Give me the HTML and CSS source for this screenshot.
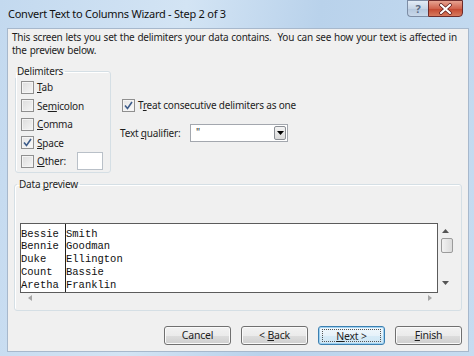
FILE: index.html
```html
<!DOCTYPE html>
<html lang="en">
<head>
    <meta charset="UTF-8">
    <meta name="viewport" content="width=device-width, initial-scale=1.0">
    <title>Convert Text to Columns Wizard</title>
    <link rel="stylesheet" href="styles.css">
</head>
<body>
    <div class="window">
        <div class="titlebar">
            <span class="title">Convert Text to Columns Wizard - Step 2 of 3</span>
            <div class="caption-buttons">
                <span class="help-btn">?</span>
                <span class="close-btn">
                    <svg width="15" height="12" viewBox="0 0 15 12">
                        <path d="M3 2 L12 10 M12 2 L3 10" stroke="#5a1b1b" stroke-width="3.6" stroke-linecap="round" fill="none"/>
                        <path d="M3 2 L12 10 M12 2 L3 10" stroke="#fff" stroke-width="2.2" stroke-linecap="round" fill="none"/>
                    </svg>
                </span>
            </div>
        </div>

        <div class="client">
            <p class="intro">This screen lets you set the delimiters your data contains.&nbsp; You can see how your text is affected in the preview below.</p>

            <div class="options">
                <fieldset class="group delimiters">
                    <legend>Delimiters</legend>
                    <div class="check-row"><span class="checkbox"></span><span><u>T</u>ab</span></div>
                    <div class="check-row"><span class="checkbox"></span><span>Se<u>m</u>icolon</span></div>
                    <div class="check-row"><span class="checkbox"></span><span><u>C</u>omma</span></div>
                    <div class="check-row"><span class="checkbox checked"><svg width="9" height="9" viewBox="0 0 9 9"><path d="M1 4.5 L3.5 7.5 L8 1" stroke="#3d5c8a" stroke-width="1.6" fill="none"/></svg></span><span><u>S</u>pace</span></div>
                    <div class="check-row"><span class="checkbox"></span><span class="other-label"><u>O</u>ther:</span><span class="other-input"></span></div>
                </fieldset>

                <div class="side-options">
                    <div class="check-row"><span class="checkbox checked"><svg width="9" height="9" viewBox="0 0 9 9"><path d="M1 4.5 L3.5 7.5 L8 1" stroke="#3d5c8a" stroke-width="1.6" fill="none"/></svg></span><span>T<u>r</u>eat consecutive delimiters as one</span></div>
                    <div class="qualifier-row">
                        <span class="qualifier-label">Text <u>q</u>ualifier:</span>
                        <div class="select">
                            <span class="select-value">"</span>
                            <span class="select-arrow"><svg width="7" height="4" viewBox="0 0 7 4"><path d="M0 0 H7 L3.5 4 Z" fill="#000"/></svg></span>
                        </div>
                    </div>
                </div>
            </div>

            <fieldset class="group preview-group">
                <legend>Data <u>p</u>review</legend>
                <div class="preview-wrap">
                    <div class="preview-main">
                        <div class="preview-box">
                            <div class="col col-first">
                                <div>Bessie</div>
                                <div>Bennie</div>
                                <div>Duke</div>
                                <div>Count</div>
                                <div>Aretha</div>
                            </div>
                            <div class="col">
                                <div>Smith</div>
                                <div>Goodman</div>
                                <div>Ellington</div>
                                <div>Bassie</div>
                                <div>Franklin</div>
                            </div>
                        </div>
                        <div class="hscroll">
                            <svg width="4" height="6" viewBox="0 0 4 6"><path d="M4 0 V6 L0 3 Z" fill="#a5a5a5"/></svg>
                            <svg width="4" height="6" viewBox="0 0 4 6"><path d="M0 0 V6 L4 3 Z" fill="#a5a5a5"/></svg>
                        </div>
                    </div>
                    <div class="vscroll">
                        <svg width="7" height="4" viewBox="0 0 7 4"><path d="M0 4 H7 L3.5 0 Z" fill="#555"/></svg>
                        <span class="thumb"></span>
                        <svg class="down" width="7" height="4" viewBox="0 0 7 4"><path d="M0 0 H7 L3.5 4 Z" fill="#555"/></svg>
                    </div>
                </div>
            </fieldset>

            <div class="buttons">
                <button class="btn">Cancel</button>
                <button class="btn">&lt; <u>B</u>ack</button>
                <button class="btn btn-default"><span class="focus-ring"><u>N</u>ext &gt;</span></button>
                <button class="btn"><u>F</u>inish</button>
            </div>
        </div>
    </div>
</body>
</html>
```

FILE: styles.css
```css
body {
    margin: 0;
    font-family: "Noto Sans", "Open Sans", sans-serif;
    font-size: 10px;
    letter-spacing: -0.2px;
    color: #1e1e1e;
}

.window {
    width: 474px;
    height: 356px;
    box-sizing: border-box;
    padding: 0 5px 4px 7px;
    display: flex;
    flex-direction: column;
    background: linear-gradient(100deg, #c3d9ef 0%, #d3e4f4 35%, #b9d2eb 60%, #c6dcf1 100%);
}

.titlebar {
    height: 28px;
    flex: none;
    display: flex;
    align-items: flex-start;
}

.title {
    margin-top: 6px;
    margin-left: 1px;
    font-size: 11px;
    letter-spacing: -0.25px;
    color: #111;
}

.caption-buttons {
    margin-left: auto;
    margin-right: 6px;
    display: flex;
}

.help-btn {
    width: 21px;
    height: 17px;
    box-sizing: border-box;
    border: 1px solid #7d8da5;
    border-right: none;
    border-radius: 0 0 0 4px;
    background: linear-gradient(#e3ecf6, #c6d5e6 50%, #b4c7dd 51%, #c9d8ea);
    text-align: center;
    font-size: 11px;
    font-weight: bold;
    line-height: 15px;
    color: #5b6b82;
}

.close-btn {
    width: 35px;
    height: 17px;
    box-sizing: border-box;
    border: 1px solid #6d2b2b;
    border-radius: 0 0 4px 0;
    background: linear-gradient(#e7a391, #d0644e 50%, #c3462f 51%, #d77a5e);
    display: flex;
    align-items: center;
    justify-content: center;
}

.client {
    flex: 1;
    border: 1px solid #a7b8cc;
    background-color: #f0f0f0;
    display: flex;
    flex-direction: column;
}

.intro {
    margin: 0;
    padding: 2px 0 0 4px;
    line-height: 13px;
    height: 28px;
    letter-spacing: -0.25px;
    word-spacing: 0.6px;
}

.options {
    display: flex;
    margin-top: 6px;
}

.group {
    margin: 0;
    padding: 0;
    border: 1px solid #d5dfe5;
    border-radius: 3px;
    box-shadow: inset 1px 1px 0 #fff;
}

.group legend {
    padding: 0 2px;
    margin-left: -1px;
    line-height: 13px;
}

.delimiters {
    width: 96px;
    box-sizing: border-box;
    margin-left: 7px;
    padding: 0 0 1px 0;
}

.delimiters .check-row {
    padding-left: 5px;
}

.check-row {
    height: 18.5px;
    display: flex;
    align-items: center;
    gap: 3px;
}

.checkbox {
    width: 13px;
    height: 13px;
    flex: none;
    box-sizing: border-box;
    border: 1px solid #8f8f8f;
    background: linear-gradient(135deg, #dcdcdc, #f6f6f6);
    box-shadow: inset 0 0 0 1px #f4f4f4;
    display: flex;
    align-items: center;
    justify-content: center;
}

.checkbox.checked {
    background: linear-gradient(135deg, #e4e4e4, #fbfbfb);
}

.other-label {
    width: 37px;
}

.other-input {
    width: 26px;
    height: 18px;
    box-sizing: border-box;
    border: 1px solid #b9c0c8;
    background-color: #fff;
}

.side-options {
    margin-left: 11px;
    padding-top: 31px;
}

.qualifier-row {
    display: flex;
    align-items: center;
    margin-top: 9px;
    margin-left: -2px;
}

.qualifier-label {
    width: 70px;
}

.select {
    width: 98px;
    height: 18px;
    box-sizing: border-box;
    border: 1px solid #a3a7ae;
    background-color: #fff;
    display: flex;
    align-items: stretch;
}

.select-value {
    flex: 1;
    padding-left: 5px;
    line-height: 14px;
}

.select-arrow {
    width: 12px;
    margin: 1px;
    box-sizing: border-box;
    border: 1px solid #8b8f95;
    border-radius: 2px;
    background: linear-gradient(#f3f3f3, #dadada);
    display: flex;
    align-items: center;
    justify-content: center;
}

.preview-group {
    margin: 5px 0 0 6px;
    width: 448px;
    box-sizing: border-box;
    padding: 0 0 6px 5px;
}

.preview-group legend {
    margin-left: -3px;
}

.preview-wrap {
    display: flex;
    margin-top: 32px;
}

.preview-main {
    width: 418px;
}

.preview-box {
    height: 70px;
    box-sizing: border-box;
    border: 1px solid #5b5b5b;
    background-color: #fff;
    display: flex;
    overflow: hidden;
    font-family: "Liberation Mono", "Courier New", monospace;
    font-size: 10.5px;
    letter-spacing: 0;
    line-height: 12.75px;
    color: #111;
}

.col {
    padding-top: 4px;
}

.col-first {
    width: 44px;
    border-right: 1px solid #222;
}

.hscroll {
    height: 11px;
    display: flex;
    align-items: center;
    justify-content: space-between;
    padding: 0 6px 0 8px;
}

.vscroll {
    width: 15px;
    height: 70px;
    display: flex;
    flex-direction: column;
    align-items: center;
    padding-top: 6px;
    box-sizing: border-box;
}

.thumb {
    width: 12px;
    height: 15px;
    box-sizing: border-box;
    margin-top: 5px;
    margin-left: 3px;
    border: 1px solid #9b9b9b;
    border-radius: 2px;
    background: linear-gradient(90deg, #f2f2f2, #dcdcdc);
}

.vscroll .down {
    margin-top: auto;
    margin-bottom: 8px;
}

.buttons {
    display: flex;
    justify-content: flex-end;
    gap: 10px;
    margin-top: 15px;
    padding-right: 6px;
}

.btn {
    width: 67px;
    height: 19px;
    box-sizing: border-box;
    padding: 0;
    border: 1px solid #707070;
    border-radius: 3px;
    background: linear-gradient(#f2f2f2, #ebebeb 50%, #dddddd 51%, #cfcfcf);
    font-family: inherit;
    font-size: 10.5px;
    letter-spacing: -0.2px;
    color: #1e1e1e;
    box-shadow: inset 0 0 0 1px #fafafa;
}

.btn-default {
    border-color: #3c7fb1;
    background: linear-gradient(#f2f8fc, #e6f2fa 50%, #d7ebf7 51%, #cfe6f5);
    box-shadow: inset 0 0 0 1px #9fd1f0;
    display: flex;
    align-items: center;
    justify-content: center;
}

.focus-ring {
    display: block;
    width: 59px;
    height: 13px;
    line-height: 12px;
    box-sizing: border-box;
    border: 1px dotted #555;
}
```
